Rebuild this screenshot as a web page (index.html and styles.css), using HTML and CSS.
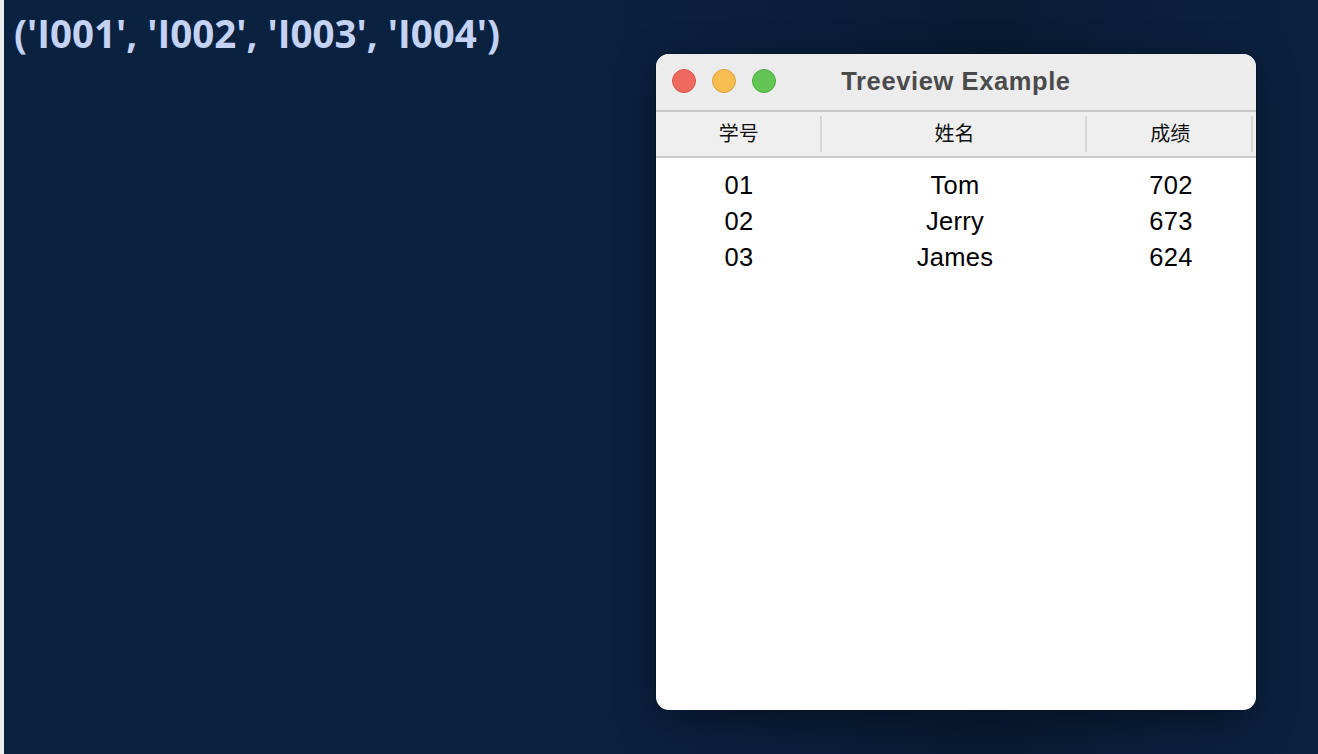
FILE: index.html
```html
<!DOCTYPE html>
<html lang="zh">
<head>
<meta charset="utf-8">
<title>Treeview Example</title>
<link rel="stylesheet" href="styles.css">
</head>
<body>
<div class="desktop">
  <div class="output">('I001', 'I002', 'I003', 'I004')</div>
  <div class="window">
    <div class="titlebar">
      <div class="lights">
        <span class="light red"></span>
        <span class="light yellow"></span>
        <span class="light green"></span>
      </div>
      <div class="title">Treeview Example</div>
    </div>
    <div class="header">
      <div class="hcell c1">学号</div>
      <div class="hcell c2">姓名</div>
      <div class="hcell c3">成绩</div>
    </div>
    <div class="rows">
      <div class="row"><span class="c1">01</span><span class="c2">Tom</span><span class="c3">702</span></div>
      <div class="row"><span class="c1">02</span><span class="c2">Jerry</span><span class="c3">673</span></div>
      <div class="row"><span class="c1">03</span><span class="c2">James</span><span class="c3">624</span></div>
    </div>
  </div>
</div>
</body>
</html>
```

FILE: styles.css
```css
html, body {
  margin: 0;
  padding: 0;
  height: 100%;
  background: #ececec;
}
.desktop {
  position: relative;
  margin-left: 4px;
  height: 754px;
  overflow: hidden;
  background: linear-gradient(90deg, #0a223f 0%, #0a2140 45%, #081b33 75%, #0a2240 100%);
}
.output {
  padding: 9px 0 0 10px;
  font-family: "Open Sans", "Liberation Sans", sans-serif;
  font-weight: 700;
  font-size: 38.5px;
  line-height: 48px;
  color: #c4d2f4;
  white-space: nowrap;
}
.window {
  position: absolute;
  left: 652px;
  top: 54px;
  width: 600px;
  height: 656px;
  background: #ffffff;
  border-radius: 13px;
  overflow: hidden;
  box-shadow: 0 10px 40px rgba(0, 0, 0, 0.35), 0 0 0 1px rgba(0, 0, 0, 0.15);
  font-family: "Liberation Sans", Arial, sans-serif;
}
.titlebar {
  position: relative;
  height: 56px;
  background: #ececed;
  border-bottom: 2px solid #c9c9c9;
  display: flex;
  align-items: center;
  justify-content: center;
}
.lights {
  position: absolute;
  left: 16px;
  top: 15px;
  display: flex;
  gap: 16px;
}
.light {
  width: 24px;
  height: 24px;
  border-radius: 50%;
  box-sizing: border-box;
}
.red { background: #ee6a5f; border: 1px solid #d5574d; }
.yellow { background: #f6be50; border: 1px solid #dca33b; }
.green { background: #62c554; border: 1px solid #4fac43; }
.title {
  font-weight: bold;
  font-size: 25.5px;
  letter-spacing: 0.6px;
  color: #4b4b4b;
  margin-top: -2px;
}
.header {
  display: flex;
  height: 44px;
  background: #efefef;
  border-bottom: 2px solid #c9c9c9;
  padding-right: 3px;
}
.hcell {
  position: relative;
  display: flex;
  align-items: center;
  justify-content: center;
  font-family: "Noto Sans CJK SC", sans-serif;
  font-size: 20px;
  color: #111;
  padding-bottom: 3px;
  box-sizing: border-box;
}
.hcell::after {
  content: "";
  position: absolute;
  right: 0;
  top: 4px;
  bottom: 4px;
  width: 2px;
  background: #d6d6d6;
}
.c1 { width: 166px; }
.c2 { width: 266px; }
.c3 { width: 166px; }
.rows {
  padding-top: 9px;
}
.row {
  display: flex;
  height: 36px;
  align-items: center;
  font-size: 25.5px;
  letter-spacing: 0.3px;
  color: #000;
}
.row span {
  text-align: center;
}
```
